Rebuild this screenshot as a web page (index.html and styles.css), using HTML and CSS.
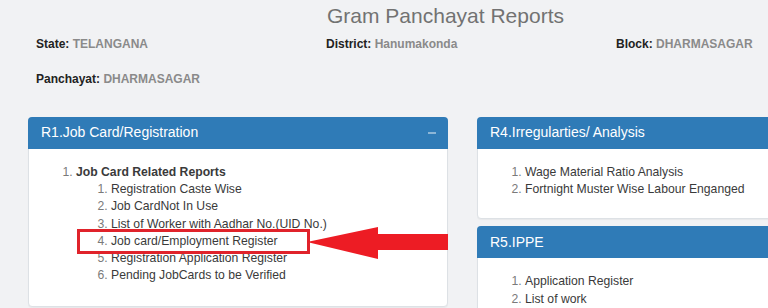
FILE: index.html
```html
<!DOCTYPE html>
<html lang="en">
<head>
  <meta charset="UTF-8">
  <title>Gram Panchayat Reports</title>
  <link rel="stylesheet" href="styles.css">
</head>
<body>
  <div class="page">
    <h1 class="page-title">Gram Panchayat Reports</h1>

    <div class="info-grid">
      <p class="info"><b>State:</b> <span class="info-value">TELANGANA</span></p>
      <p class="info"><b>District:</b> <span class="info-value">Hanumakonda</span></p>
      <p class="info"><b>Block:</b> <span class="info-value">DHARMASAGAR</span></p>
      <p class="info"><b>Panchayat:</b> <span class="info-value">DHARMASAGAR</span></p>
    </div>

    <div class="panels">
      <div class="panel panel-main">
        <div class="panel-heading">
          <span>R1.Job Card/Registration</span>
          <span class="collapse-icon"></span>
        </div>
        <div class="panel-body">
          <ol class="report-list">
            <li>
              <b>Job Card Related Reports</b>
              <ol class="report-list sub-list">
                <li>Registration Caste Wise</li>
                <li>Job CardNot In Use</li>
                <li>List of Worker with Aadhar No.(UID No.)</li>
                <li>Job card/Employment Register</li>
                <li>Registration Application Register</li>
                <li>Pending JobCards to be Verified</li>
              </ol>
            </li>
          </ol>
        </div>
        <div class="highlight-box"></div>
        <svg class="highlight-arrow" width="141" height="34" viewBox="0 0 141 34">
          <polygon points="0,16 71,1 71,8 141,8 141,24 71,24 71,33" fill="#ed1c24"/>
        </svg>
      </div>

      <div class="side-column">
        <div class="panel">
          <div class="panel-heading">
            <span>R4.Irregularties/ Analysis</span>
          </div>
          <div class="panel-body">
            <ol class="report-list">
              <li>Wage Material Ratio Analysis</li>
              <li>Fortnight Muster Wise Labour Enganged</li>
            </ol>
          </div>
        </div>
        <div class="panel">
          <div class="panel-heading">
            <span>R5.IPPE</span>
          </div>
          <div class="panel-body">
            <ol class="report-list">
              <li>Application Register</li>
              <li>List of work</li>
            </ol>
          </div>
        </div>
      </div>
    </div>
  </div>
</body>
</html>
```

FILE: styles.css
```css
* {
  box-sizing: border-box;
  margin: 0;
  padding: 0;
}

html,
body {
  overflow: hidden;
}

body {
  background: #f1f2f4;
  font-family: "Liberation Sans", Arial, sans-serif;
  font-size: 12.2px;
  line-height: 17.2px;
  color: #3a3a3a;
}

.page {
  width: 891px;
  padding-top: 4px;
}

.page-title {
  text-align: center;
  font-size: 21px;
  line-height: 24px;
  font-weight: normal;
  color: #727272;
}

.info-grid {
  display: grid;
  grid-template-columns: 290px 290px 290px;
  row-gap: 18px;
  padding-left: 36px;
  margin-top: 8px;
  font-size: 12px;
  line-height: 17px;
}

.info {
  font-weight: bold;
  color: #222;
}

.info-value {
  color: #8a8a8a;
}

.panels {
  display: grid;
  grid-template-columns: 420px 420px;
  column-gap: 29px;
  align-items: start;
  padding-left: 28px;
  margin-top: 29px;
}

.side-column {
  display: flex;
  flex-direction: column;
  gap: 7px;
}

.panel {
  background: white;
  border: 1px solid #dde1e5;
  border-radius: 4px;
  box-shadow: 0 1px 1px rgba(0, 0, 0, 0.04);
}

.panel-main {
  position: relative;
}

.panel-heading {
  display: flex;
  justify-content: space-between;
  align-items: center;
  height: 32px;
  margin: -1px -1px 0;
  padding: 0 12px 0 13px;
  background: #2f7bb7;
  border-radius: 4px 4px 0 0;
  color: white;
  font-size: 14px;
}

.collapse-icon {
  width: 8px;
  height: 1.5px;
  background: rgba(255, 255, 255, 0.45);
}

.panel-body {
  padding: 15px 12px 20px;
}

.panel-main .panel-body {
  padding-bottom: 22px;
}

.report-list {
  padding-left: 35px;
}

.report-list li::marker {
  color: #7a7a7a;
  font-weight: normal;
}

.sub-list {
  padding-left: 35px;
}

.highlight-box {
  position: absolute;
  left: 48px;
  top: 111px;
  width: 233px;
  height: 25px;
  border: 3px solid #e0232b;
}

.highlight-arrow {
  position: absolute;
  left: 278px;
  top: 108px;
}
```
